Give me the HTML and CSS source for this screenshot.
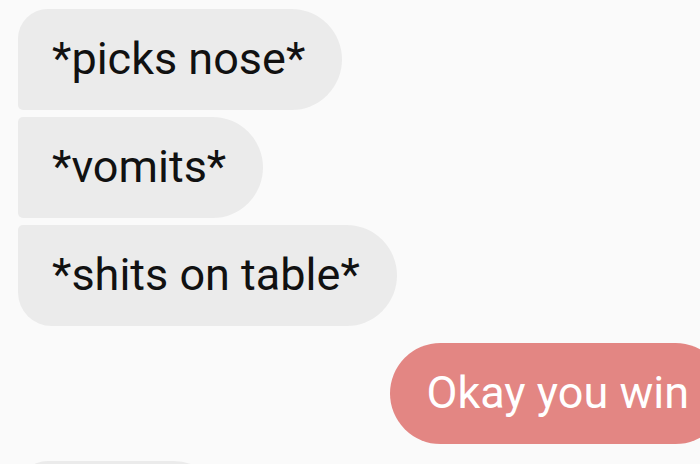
FILE: index.html
```html
<!DOCTYPE html>
<html lang="en">
<head>
    <meta charset="UTF-8">
    <meta name="viewport" content="width=device-width, initial-scale=1.0">
    <title>Chat</title>
    <link rel="stylesheet" href="styles.css">
</head>
<body>
    <div class="thread">
        <div class="group group-in">
            <div class="bubble in first">*picks nose*</div>
            <div class="bubble in middle">*vomits*</div>
            <div class="bubble in last">*shits on table*</div>
        </div>

        <div class="group group-out">
            <div class="bubble out">Okay you win</div>
        </div>

        <div class="group group-in">
            <div class="bubble in first peek">&nbsp;</div>
        </div>
    </div>
</body>
</html>
```

FILE: styles.css
```css
/* General Styles */
body {
    margin: 0;
    background-color: #fafafa;
    font-family: Roboto, "Noto Sans", Arial, sans-serif;
    overflow: hidden;
    height: 464px;
}

.thread {
    display: flex;
    flex-direction: column;
    gap: 17px;
    padding: 9px 0 0 18px;
}

.group {
    display: flex;
    flex-direction: column;
    gap: 7px;
}

.group-in {
    align-items: flex-start;
}

.group-out {
    align-items: flex-end;
    margin-right: -26px;
}

/* Bubbles */
.bubble {
    font-size: 45px;
    line-height: 51px;
    padding: 24px 37px 26px 34px;
    white-space: nowrap;
}

.bubble.in {
    background-color: #ebebeb;
    color: #111;
    border-radius: 5px 51px 51px 5px;
}

.bubble.in.first {
    border-top-left-radius: 30px;
}

.bubble.in.last {
    border-bottom-left-radius: 34px;
}

/* next message, only its top edge shows */
.bubble.peek {
    width: 135px;
}

.bubble.out {
    background-color: #e38683;
    color: #fff;
    padding-left: 36px;
    border-radius: 51px;
}
```
